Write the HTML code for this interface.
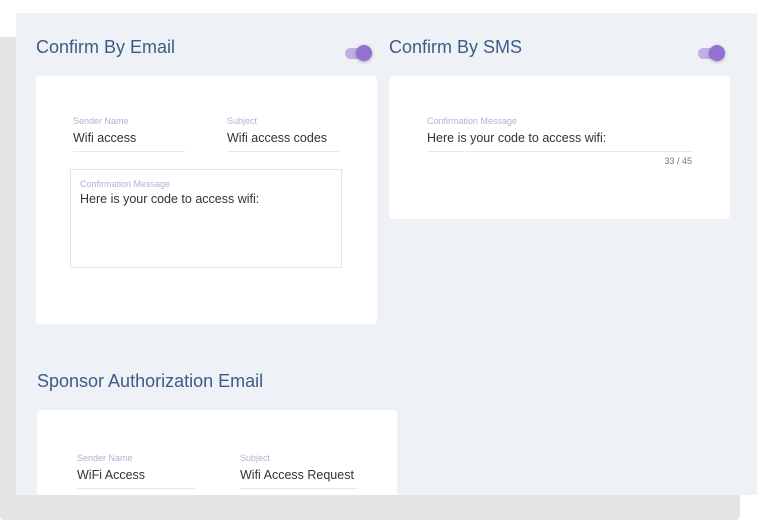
<!DOCTYPE html>
<html><head><style>
*{margin:0;padding:0;box-sizing:border-box}
body{width:768px;height:529px;background:#fff;position:relative;overflow:hidden;font-family:"Liberation Sans",sans-serif}
.abs{position:absolute}
.back{left:0;top:37px;width:740px;height:483px;background:#e4e4e4;border-radius:0 0 4px 4px}
.front{left:16px;top:13px;width:741px;height:482px;background:#eef1f6;overflow:hidden}
.card{background:#fff;border-radius:4px}
.t{color:#3f5a88;font-size:18px;white-space:nowrap}
.l{color:#a9b5d2;font-size:9px;white-space:nowrap}
.v{color:#333;font-size:12.5px;white-space:nowrap}
.u{height:1px;background:#e6e9f0}
.tr{width:26px;height:11px;border-radius:6px;background:#c3aee6}
.kn{width:16px;height:16px;border-radius:50%;background:#9470d2;box-shadow:0 1px 3px rgba(0,0,0,.3)}
</style></head><body>
<div class="abs back"></div>
<div class="abs front"></div>
<div class="abs t" style="left:36px;top:37px">Confirm By Email</div>
<div class="abs tr" style="left:345px;top:48px"></div>
<div class="abs kn" style="left:356px;top:45px"></div>
<div class="abs t" style="left:389px;top:37px">Confirm By SMS</div>
<div class="abs tr" style="left:698px;top:48px"></div>
<div class="abs kn" style="left:709px;top:45px"></div>

<div class="abs card" style="left:36px;top:76px;width:341px;height:248px"></div>
<div class="abs l" style="left:73px;top:116px">Sender Name</div>
<div class="abs v" style="left:73px;top:131px">Wifi access</div>
<div class="abs u" style="left:73px;top:151px;width:112px"></div>
<div class="abs l" style="left:227px;top:116px">Subject</div>
<div class="abs v" style="left:227px;top:131px">Wifi access codes</div>
<div class="abs u" style="left:227px;top:151px;width:112px"></div>
<div class="abs" style="left:70px;top:169px;width:272px;height:99px;border:1px solid #dfe3ec"></div>
<div class="abs l" style="left:80px;top:179px">Confirmation Message</div>
<div class="abs v" style="left:80px;top:192px">Here is your code to access wifi:</div>

<div class="abs card" style="left:389px;top:76px;width:341px;height:143px"></div>
<div class="abs l" style="left:427px;top:116px">Confirmation Message</div>
<div class="abs v" style="left:427px;top:131px">Here is your code to access wifi:</div>
<div class="abs u" style="left:427px;top:151px;width:265px"></div>
<div class="abs l" style="left:652px;top:156px;width:40px;text-align:right;color:#777">33 / 45</div>

<div class="abs t" style="left:37px;top:371px">Sponsor Authorization Email</div>
<div class="abs card" style="left:37px;top:410px;width:360px;height:85px;border-radius:4px 4px 0 0"></div>
<div class="abs l" style="left:77px;top:453px">Sender Name</div>
<div class="abs v" style="left:77px;top:468px">WiFi Access</div>
<div class="abs u" style="left:77px;top:488px;width:118px"></div>
<div class="abs l" style="left:240px;top:453px">Subject</div>
<div class="abs v" style="left:240px;top:468px">Wifi Access Request</div>
<div class="abs u" style="left:240px;top:488px;width:118px"></div>
</body></html>
